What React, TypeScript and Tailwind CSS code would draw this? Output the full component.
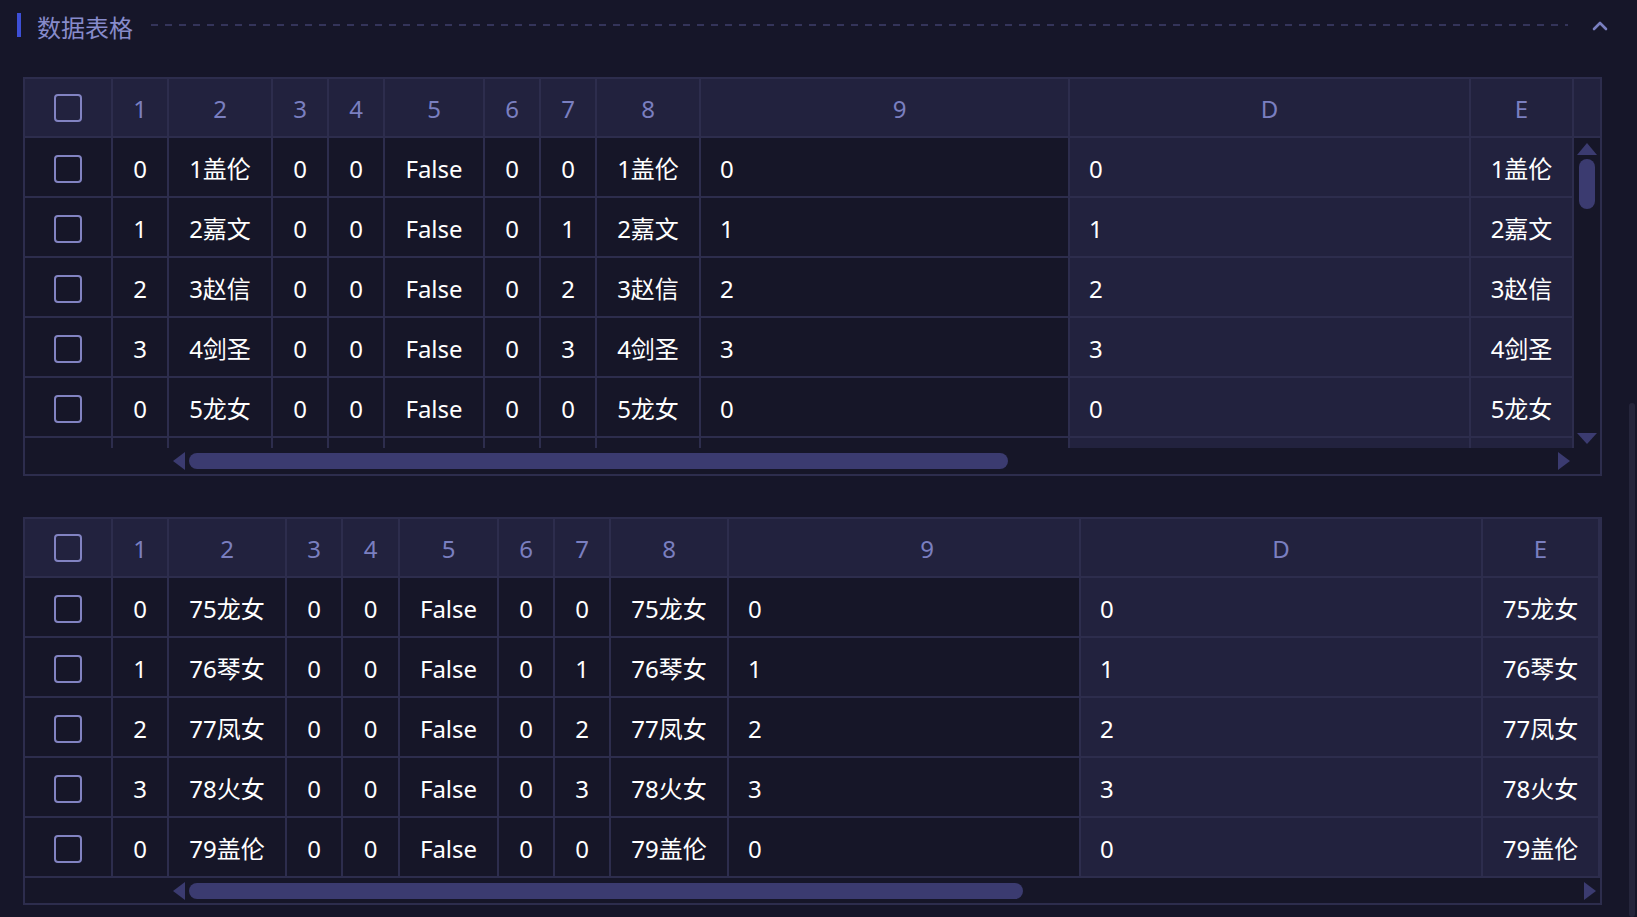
import React from "react";

type Row = (string | number)[];

const rowsTop: Row[] = [
  [0, "1盖伦", 0, 0, "False", 0, 0, "1盖伦", 0, 0, "1盖伦"],
  [1, "2嘉文", 0, 0, "False", 0, 1, "2嘉文", 1, 1, "2嘉文"],
  [2, "3赵信", 0, 0, "False", 0, 2, "3赵信", 2, 2, "3赵信"],
  [3, "4剑圣", 0, 0, "False", 0, 3, "4剑圣", 3, 3, "4剑圣"],
  [0, "5龙女", 0, 0, "False", 0, 0, "5龙女", 0, 0, "5龙女"],
];

const rowsBottom: Row[] = [
  [0, "75龙女", 0, 0, "False", 0, 0, "75龙女", 0, 0, "75龙女"],
  [1, "76琴女", 0, 0, "False", 0, 1, "76琴女", 1, 1, "76琴女"],
  [2, "77凤女", 0, 0, "False", 0, 2, "77凤女", 2, 2, "77凤女"],
  [3, "78火女", 0, 0, "False", 0, 3, "78火女", 3, 3, "78火女"],
  [0, "79盖伦", 0, 0, "False", 0, 0, "79盖伦", 0, 0, "79盖伦"],
];

// the next row, scrolled so only its top edge shows
const emptyRow: Row = ["", "", "", "", "", "", "", "", "", "", ""];

const headers = ["1", "2", "3", "4", "5", "6", "7", "8", "9", "D", "E"];

function Checkbox() {
  return <span className="block w-[28px] h-[28px] rounded-[4px] border-2 border-[#8283c2]" />;
}

function ArrowLeft() {
  return (
    <svg width="12" height="18" viewBox="0 0 12 18" className="shrink-0">
      <polygon points="12,0 12,18 0,9" fill="#3b3b70" />
    </svg>
  );
}

function ArrowRight() {
  return (
    <svg width="12" height="18" viewBox="0 0 12 18" className="shrink-0">
      <polygon points="0,0 0,18 12,9" fill="#3b3b70" />
    </svg>
  );
}

function HeaderCells({ nineClass }: { nineClass: string }) {
  return (
    <>
      <div className="flex items-center justify-center border-r-2 border-b-2 border-[#2d2d4d] bg-[#22223e] h-[59px] pt-[1px]">
        <Checkbox />
      </div>
      {headers.map((h) => (
        <div
          key={h}
          className={`flex items-center justify-center border-r-2 border-b-2 border-[#2d2d4d] bg-[#22223e] h-[59px] pt-[2px] text-[#7a7fc0] ${
            h === "9" ? nineClass : ""
          }`}
        >
          {h}
        </div>
      ))}
    </>
  );
}

function BodyCells({ row, box = true }: { row: Row; box?: boolean }) {
  return (
    <>
      <div className="flex items-center justify-center border-r-2 border-b-2 border-[#2d2d4d] h-[60px] pt-[3px]">
        {box && <Checkbox />}
      </div>
      {row.map((v, i) => {
        const light = i >= 9;
        const left = i === 8 || i === 9;
        return (
          <div
            key={i}
            className={`flex items-center border-r-2 border-b-2 border-[#2d2d4d] h-[60px] pt-[3px] whitespace-nowrap ${
              light ? "bg-[#22223e]" : ""
            } ${left ? "justify-start pl-[19px]" : "justify-center"}`}
          >
            {v}
          </div>
        );
      })}
    </>
  );
}

function TopTable() {
  return (
    <div className="w-[1579px] border-2 border-[#2d2d4d] bg-[#161628]">
      <div className="grid grid-cols-[88px_56px_104px_56px_56px_100px_56px_56px_104px_369px_401px_103px_26px]">
        <HeaderCells nineClass="pl-[30px]" />
        <div className="border-b-2 border-[#2d2d4d] bg-[#22223e] h-[59px]" />
      </div>
      <div className="flex h-[310px]">
        <div className="h-[310px] overflow-hidden">
          <div className="grid grid-cols-[88px_56px_104px_56px_56px_100px_56px_56px_104px_369px_401px_103px]">
            {rowsTop.map((r, i) => (
              <BodyCells key={i} row={r} />
            ))}
            <BodyCells row={emptyRow} box={false} />
          </div>
        </div>
        <div className="w-[26px] flex flex-col items-center pt-[5px] pb-[4px]">
          <svg width="20" height="12" viewBox="0 0 20 12">
            <polygon points="0,12 20,12 10,0" fill="#3b3b70" />
          </svg>
          <div className="mt-[4px] w-[16px] h-[50px] rounded-full bg-[#3b3b70]" />
          <div className="flex-1" />
          <svg width="20" height="11" viewBox="0 0 20 11">
            <polygon points="0,0 20,0 10,11" fill="#3b3b70" />
          </svg>
        </div>
      </div>
      <div className="flex items-center h-[26px] pl-[148px] pr-[30px]">
        <ArrowLeft />
        <div className="ml-[4px] w-[819px] h-[16px] rounded-full bg-[#3b3b70]" />
        <div className="flex-1" />
        <ArrowRight />
      </div>
    </div>
  );
}

function BottomTable() {
  return (
    <div className="w-[1579px] border-2 border-[#2d2d4d] bg-[#161628]">
      <div className="grid grid-cols-[88px_56px_118px_56px_57px_99px_56px_56px_118px_352px_402px_117px]">
        <HeaderCells nineClass="pl-[46px]" />
        {rowsBottom.map((r, i) => (
          <BodyCells key={i} row={r} />
        ))}
      </div>
      <div className="flex items-center h-[25px] pl-[148px] pr-[4px]">
        <ArrowLeft />
        <div className="ml-[4px] w-[834px] h-[16px] rounded-full bg-[#3b3b70]" />
        <div className="flex-1" />
        <ArrowRight />
      </div>
    </div>
  );
}

export default function App() {
  return (
    <div className="relative w-[1637px] h-[917px] overflow-hidden bg-[#161629] text-white text-[24px] font-['Noto_Sans','Noto_Sans_CJK_SC',sans-serif]">
      <div className="flex items-center h-[50px] pl-[17px] pr-[29px]">
        <span className="w-[4px] h-[24px] bg-[#3d4fd6]" />
        <span className="ml-[16px] pt-[5px] text-[#878bcb] leading-none">数据表格</span>
        <div className="ml-[18px] flex-1 h-[2px] bg-[repeating-linear-gradient(90deg,#34345a_0_7px,transparent_7px_14px)]" />
        <svg width="16" height="11" viewBox="0 0 16 11" className="ml-[24px]">
          <polyline points="2,9 8,3 14,9" fill="none" stroke="#7a7fc0" strokeWidth="2.6" strokeLinecap="round" strokeLinejoin="round" />
        </svg>
      </div>
      <div className="flex flex-col pl-[23px] pt-[27px] gap-[41px]">
        <TopTable />
        <BottomTable />
      </div>
      <div className="absolute right-[2px] top-[403px] bottom-0 w-[6px] rounded-full bg-[#25253b]" />
    </div>
  );
}
